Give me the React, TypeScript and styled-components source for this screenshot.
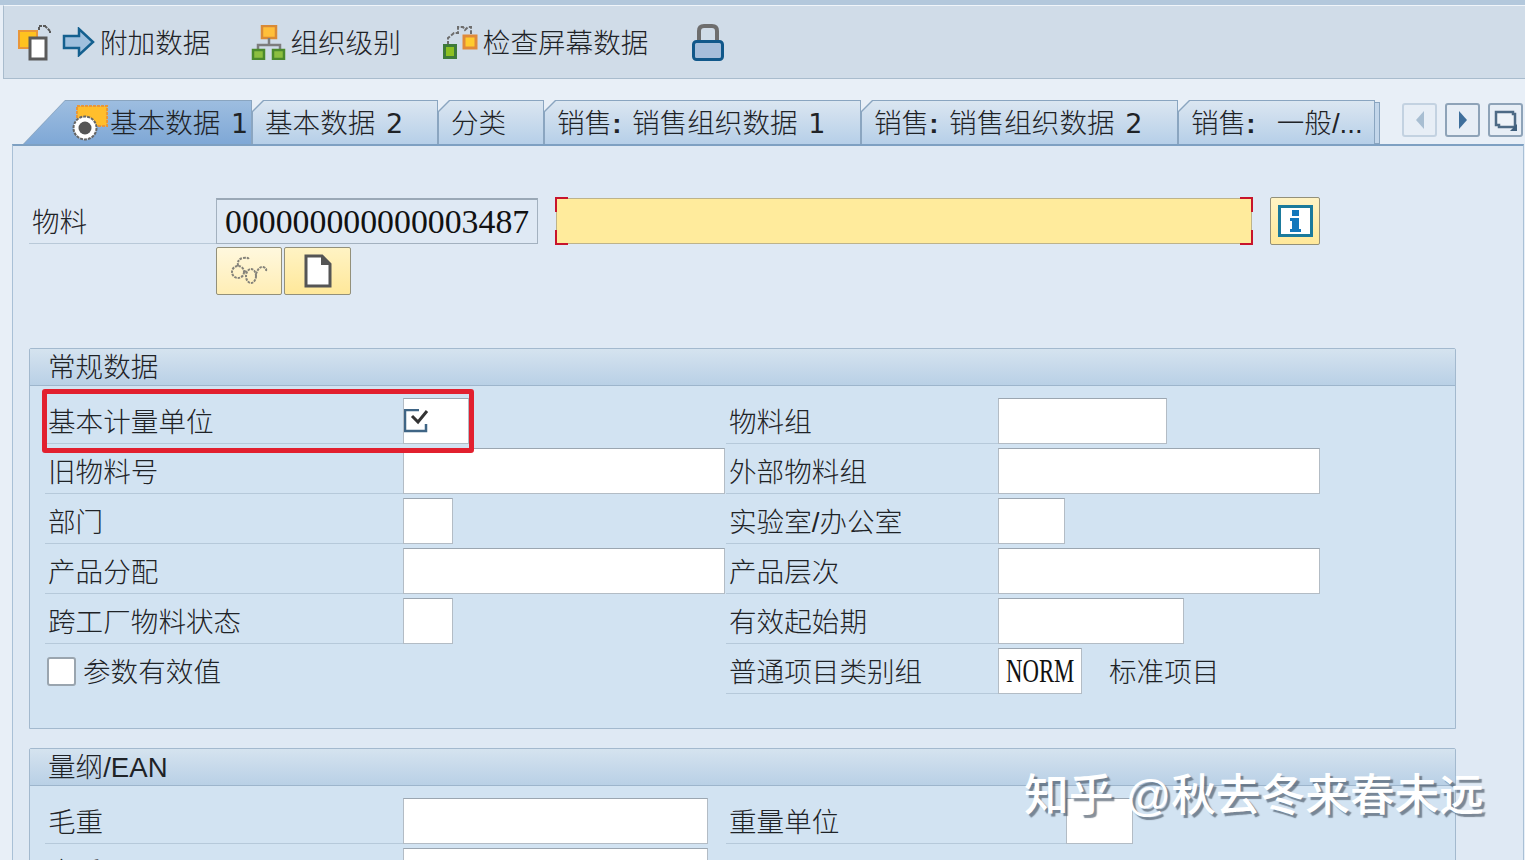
import styled, { createGlobalStyle } from 'styled-components'

const GlobalStyle = createGlobalStyle`
  html, body {
    margin: 0;
    padding: 0;
    background: #e8eff7;
  }
  * {
    box-sizing: border-box;
  }
`

const Page = styled.div`
  position: relative;
  width: 1525px;
  height: 860px;
  overflow: hidden;
  background: #e8eff7;
  color: #1f2327;
  font-family: 'Liberation Sans', 'Noto Sans CJK SC', sans-serif;
  font-size: 27.6px;
  font-weight: 300;
  line-height: 1;
  padding-left: 3px;
  border-top: 5px solid #b3c8dc;
`

const Toolbar = styled.div`
  display: flex;
  align-items: center;
  height: 74px;
  border-top: 1px solid #f0f5fa;
  border-left: 1px solid #a9bccd;
  border-bottom: 1px solid #a9bccd;
  background: #d0dce8;
  padding: 0 0 0 14px;
`

const ToolItem = styled.div<{ $gap: number }>`
  display: flex;
  align-items: center;
  margin-right: ${(p) => p.$gap}px;
  white-space: nowrap;
`

const ToolText = styled.span`
  margin-left: 4px;
  padding-top: 4px;
`

const TabStrip = styled.div`
  display: flex;
  align-items: flex-start;
  height: 44px;
  margin-top: 21px;
  margin-left: 20px;
`

const Tab = styled.div<{ $width: number; $active?: boolean }>`
  position: relative;
  flex: none;
  width: ${(p) => p.$width}px;
  height: 44px;
  background: #8aa5c0;
  clip-path: ${(p) =>
    p.$active
      ? 'polygon(42px 0, 100% 0, 100% 100%, 0 100%)'
      : 'polygon(11px 0, 100% 0, 100% 100%, 0 100%, 0 11px)'};

  &::before {
    content: '';
    position: absolute;
    inset: 1px 1px 0 1px;
    background: ${(p) =>
      p.$active
        ? 'linear-gradient(180deg, #9dbde0 0%, #7fa8d6 100%)'
        : 'linear-gradient(180deg, #dbe6f1 0%, #b6cfe8 100%)'};
    clip-path: ${(p) =>
      p.$active
        ? 'polygon(41px 0, 100% 0, 100% 100%, 0 100%)'
        : 'polygon(11px 0, 100% 0, 100% 100%, 0 100%, 0 11px)'};
  }
`

const TabLabel = styled.span<{ $left: number }>`
  position: absolute;
  left: ${(p) => p.$left}px;
  top: 10px;
  white-space: nowrap;
  word-spacing: 3px;
`

const TabDigit = styled.span`
  font-size: 27px;
  font-weight: 400;
  font-family: 'DejaVu Sans', sans-serif;
`

const TabColon = styled.span`
  font-weight: 700;
`

const TabIcon = styled.svg`
  position: absolute;
  left: 49px;
  top: 5px;
`

const TabBack = styled.div`
  flex: none;
  width: 5px;
  height: 42px;
  margin-top: 2px;
  border: 1px solid #8aa5c0;
  border-left: none;
  background: #c3d6ea;
`

const NavGroup = styled.div`
  display: flex;
  gap: 8px;
  margin-left: 22px;
  margin-top: 3px;
`

const NavButton = styled.div<{ $muted?: boolean }>`
  display: flex;
  align-items: center;
  justify-content: center;
  width: 35px;
  height: 34px;
  border: 2px solid ${(p) => (p.$muted ? '#c3d2e1' : '#8ea3b8')};
  border-radius: 3px;
  background: #e7eef6;
`

const Panel = styled.div`
  margin-left: 9px;
  width: 1512px;
  height: 722px;
  border: 1px solid #a9c0d6;
  border-top: 2px solid #7ea0c2;
  background: #dfe9f4;
  padding: 52px 0 0 16px;
`

const HeadRow = styled.div`
  display: flex;
  align-items: flex-start;
`

const HeadLabel = styled.div`
  width: 187px;
  height: 46px;
  padding: 11px 0 0 3px;
  border-bottom: 1px solid #b9c9d8;
`

const KeyField = styled.div`
  width: 322px;
  height: 46px;
  border: 1px solid #a3b1bf;
  border-top: 2px solid #9aa8b6;
  background: #dfe9f4;
  padding: 5px 0 0 8px;
  color: #111;
  font-family: 'Liberation Serif', serif;
  font-size: 33.8px;
  font-weight: 400;
`

const DescField = styled.div`
  position: relative;
  width: 696px;
  height: 46px;
  margin-left: 18px;
  border: 1px solid #bdb38a;
  background: #ffeb9c;
`

const Bracket = styled.i<{ $right?: boolean; $bottom?: boolean }>`
  position: absolute;
  width: 13px;
  height: 15px;
  ${(p) => (p.$right ? 'right: -2px;' : 'left: -2px;')}
  ${(p) => (p.$bottom ? 'bottom: -2px;' : 'top: -2px;')}
  border-color: #c8142b;
  border-style: solid;
  border-width: ${(p) =>
    `${p.$bottom ? 0 : 2}px ${p.$right ? 2 : 0}px ${p.$bottom ? 2 : 0}px ${p.$right ? 0 : 2}px`};
`

const YellowButton = styled.div<{ $width: number; $strong?: boolean }>`
  display: flex;
  align-items: center;
  justify-content: center;
  width: ${(p) => p.$width}px;
  height: 48px;
  border: 1px solid #93907a;
  border-radius: 2px;
  background: ${(p) =>
    p.$strong
      ? 'linear-gradient(180deg, #fff3c4 0%, #ffe89a 100%)'
      : 'linear-gradient(180deg, #fff8de 0%, #ffeeb5 100%)'};
`

const InfoSlot = styled.div`
  margin: -1px 0 0 18px;
`

const ButtonRow = styled.div`
  display: flex;
  gap: 2px;
  margin: 2px 0 0 187px;
`

const Group = styled.section<{ $height: number; $top: number }>`
  width: 1427px;
  height: ${(p) => p.$height}px;
  margin-top: ${(p) => p.$top}px;
  border: 1px solid #a3b9ce;
  border-radius: 2px 2px 0 0;
  background: #d2e3f2;
`

const GroupTitle = styled.div`
  height: 37px;
  padding: 5px 0 0 18px;
  border-bottom: 1px solid #9db5cc;
  background: linear-gradient(180deg, #d5e3ef 0%, #b9d0e6 100%);
`

const FormBody = styled.div`
  display: flex;
  flex-direction: column;
  gap: 4px;
  padding: 12px 0 0 15px;
`

const Row = styled.div`
  display: flex;
  height: 46px;
`

const Label = styled.div<{ $width: number }>`
  flex: none;
  width: ${(p) => p.$width}px;
  height: 46px;
  padding: 11px 0 0 3px;
  border-bottom: 1px solid #b6c9da;
  white-space: nowrap;
`

const CheckLabel = styled.div`
  display: flex;
  align-items: center;
  gap: 7px;
  flex: none;
  width: 358px;
  height: 46px;
  padding: 0 0 0 2px;
`

const CheckText = styled.span`
  padding-top: 4px;
`

const Box = styled.span`
  width: 29px;
  height: 29px;
  border: 2px solid #9aa5af;
  border-radius: 3px;
  background: #fff;
`

const FieldCell = styled.div`
  flex: none;
  width: 323px;
`

const Input = styled.div<{ $width: number }>`
  display: flex;
  align-items: center;
  width: ${(p) => p.$width}px;
  height: 46px;
  border: 1px solid #b3bcc5;
  border-top-color: #9ba6b1;
  background: #fff;
  overflow: hidden;
`

const SerifValue = styled.span`
  margin-left: 7px;
  color: #111;
  font-family: 'Liberation Serif', serif;
  font-size: 34px;
  font-weight: 400;
  white-space: nowrap;
  transform: scaleX(0.67);
  transform-origin: left center;
`

const Note = styled.span`
  margin: 11px 0 0 27px;
  white-space: nowrap;
`

const Highlight = styled.div`
  position: absolute;
  left: 42px;
  top: 384px;
  width: 432px;
  height: 64px;
  border: 5px solid #e2202f;
  border-radius: 3px;
`

const Watermark = styled.div`
  position: absolute;
  left: 1024px;
  top: 769px;
  color: #fff;
  font-family: 'Liberation Sans', 'Noto Sans CJK SC', sans-serif;
  font-size: 44.7px;
  font-weight: 500;
  white-space: nowrap;
  text-shadow: 3px 3px 1px rgba(70, 85, 100, 0.65);
`

const AddDataIcon = () => (
  <svg width="34" height="38" viewBox="0 0 34 38">
    <rect x="1" y="8" width="18" height="17" fill="#ffc21f" stroke="#e8963a" strokeWidth="2" />
    <path d="M12 15h16v21H12z" fill="#fff" stroke="#5a5a5a" strokeWidth="3" />
    <path d="M21 7V3h7M27 3l5 5M32 8v2" fill="none" stroke="#5a5a5a" strokeWidth="2" strokeDasharray="3 1" />
  </svg>
)

const ArrowIcon = () => (
  <svg width="34" height="30" viewBox="0 0 34 30">
    <path d="M2 9h15V2l14 13-14 13v-7H2z" fill="#9fc0de" stroke="#14608f" strokeWidth="2.5" />
  </svg>
)

const OrgIcon = () => (
  <svg width="35" height="35" viewBox="0 0 35 35">
    <rect x="11" y="1" width="14" height="12" fill="#ffbf3a" stroke="#d98a36" strokeWidth="2.5" />
    <path d="M18 13v6M7 25v-5h22v5" fill="none" stroke="#7d7d7d" strokeWidth="2.5" />
    <rect x="2" y="25" width="11" height="9" fill="#8cbf3f" stroke="#4c8a2c" strokeWidth="2.5" />
    <rect x="22" y="25" width="11" height="9" fill="#8cbf3f" stroke="#4c8a2c" strokeWidth="2.5" />
  </svg>
)

const CheckScreenIcon = () => (
  <svg width="36" height="36" viewBox="0 0 36 36">
    <path d="M5 21v-7l6-5h4V3h5l2 3 3-3h3v7" fill="none" stroke="#6d6d6d" strokeWidth="2" strokeDasharray="4 1.5" />
    <rect x="1.5" y="21.5" width="11" height="12" fill="#8cc021" stroke="#3d7a3a" strokeWidth="3" />
    <rect x="21" y="12" width="12" height="12" fill="#ffcc2e" stroke="#e08a3a" strokeWidth="3" />
  </svg>
)

const LockIcon = () => (
  <svg width="32" height="37" viewBox="0 0 32 37">
    <path d="M7 17V7q0-5 5-5h8q5 0 5 5v10" fill="none" stroke="#6e6e6e" strokeWidth="4" />
    <rect x="1.5" y="17.5" width="29" height="18" rx="3" fill="#a6bedb" stroke="#11588a" strokeWidth="3" />
  </svg>
)

const ActiveTabIcon = () => (
  <TabIcon width="36" height="36" viewBox="0 0 36 36">
    <rect x="5" y="1" width="30" height="20" fill="#ffbe2c" stroke="#e8973a" strokeWidth="2" strokeDasharray="3 1" />
    <circle cx="13" cy="23" r="11.5" fill="#fff" stroke="#666" strokeWidth="2" strokeDasharray="3 1" />
    <circle cx="13" cy="23" r="6.5" fill="#555" />
  </TabIcon>
)

const LeftIcon = () => (
  <svg width="12" height="18" viewBox="0 0 12 18">
    <path d="M10 0v18L2 9z" fill="#a8bed2" />
  </svg>
)

const RightIcon = () => (
  <svg width="12" height="18" viewBox="0 0 12 18">
    <path d="M2 0v18l8-9z" fill="#3f6f9c" />
  </svg>
)

const TabListIcon = () => (
  <svg width="24" height="24" viewBox="0 0 24 24">
    <path d="M2 4h17v2h2v13H5v-2H2z" fill="#eef3f8" stroke="#4d6a85" strokeWidth="2.5" />
    <path d="M23 16v7h-7z" fill="#3f5f7d" />
  </svg>
)

const InfoIcon = () => (
  <svg width="35" height="32" viewBox="0 0 35 32">
    <rect x="1.5" y="1.5" width="32" height="29" fill="#fff" stroke="#1b7a9c" strokeWidth="3" />
    <rect x="14" y="5" width="7" height="6" fill="#1377bb" />
    <path d="M12 13h9v11h2v3H12v-3h2v-8h-2z" fill="#1377bb" />
  </svg>
)

const GlassesIcon = () => (
  <svg width="38" height="30" viewBox="0 0 38 30">
    <g fill="none" stroke="#85837a" strokeWidth="2" strokeDasharray="2.5 1">
      <ellipse cx="8" cy="16" rx="6" ry="6" />
      <ellipse cx="21" cy="20" rx="5" ry="7" />
      <path d="M8 10q-1-7 5-8t6 2M14 15l3 1M26 18q3-8 7-7 4 1 3 4" />
    </g>
  </svg>
)

const DocIcon = () => (
  <svg width="28" height="34" viewBox="0 0 28 34">
    <path d="M2 2h16l8 8v22H2z" fill="#fff" stroke="#555" strokeWidth="3" />
    <path d="M17 1l10 10H17z" fill="#555" />
  </svg>
)

const CheckedIcon = () => (
  <svg width="26" height="24" viewBox="0 0 26 24">
    <path d="M15 1H1v21h21v-7" fill="none" stroke="#3f6585" strokeWidth="2.5" />
    <path d="M8 7l6 6 9-11" fill="none" stroke="#333" strokeWidth="3" />
  </svg>
)

const App = () => {
  return (
    <Page>
      <GlobalStyle />
      <Toolbar>
        <ToolItem $gap={10}>
          <AddDataIcon />
        </ToolItem>
        <ToolItem $gap={41}>
          <ArrowIcon />
          <ToolText>附加数据</ToolText>
        </ToolItem>
        <ToolItem $gap={42}>
          <OrgIcon />
          <ToolText>组织级别</ToolText>
        </ToolItem>
        <ToolItem $gap={44}>
          <CheckScreenIcon />
          <ToolText>检查屏幕数据</ToolText>
        </ToolItem>
        <ToolItem $gap={0}>
          <LockIcon />
        </ToolItem>
      </Toolbar>

      <TabStrip>
        <Tab $width={229} $active>
          <ActiveTabIcon />
          <TabLabel $left={87}>
            基本数据 <TabDigit>1</TabDigit>
          </TabLabel>
        </Tab>
        <Tab $width={186}>
          <TabLabel $left={13}>
            基本数据 <TabDigit>2</TabDigit>
          </TabLabel>
        </Tab>
        <Tab $width={106}>
          <TabLabel $left={13}>分类</TabLabel>
        </Tab>
        <Tab $width={317}>
          <TabLabel $left={13}>
            销售<TabColon>:</TabColon> 销售组织数据 <TabDigit>1</TabDigit>
          </TabLabel>
        </Tab>
        <Tab $width={317}>
          <TabLabel $left={13}>
            销售<TabColon>:</TabColon> 销售组织数据 <TabDigit>2</TabDigit>
          </TabLabel>
        </Tab>
        <Tab $width={197}>
          <TabLabel $left={13}>
            销售<TabColon>:</TabColon> &nbsp;一般/...
          </TabLabel>
        </Tab>
        <TabBack />
        <NavGroup>
          <NavButton $muted>
            <LeftIcon />
          </NavButton>
          <NavButton>
            <RightIcon />
          </NavButton>
          <NavButton>
            <TabListIcon />
          </NavButton>
        </NavGroup>
      </TabStrip>

      <Panel>
        <HeadRow>
          <HeadLabel>物料</HeadLabel>
          <KeyField>000000000000003487</KeyField>
          <DescField>
            <Bracket />
            <Bracket $right />
            <Bracket $bottom />
            <Bracket $right $bottom />
          </DescField>
          <InfoSlot>
            <YellowButton $width={50} $strong>
              <InfoIcon />
            </YellowButton>
          </InfoSlot>
        </HeadRow>
        <ButtonRow>
          <YellowButton $width={66}>
            <GlassesIcon />
          </YellowButton>
          <YellowButton $width={67} $strong>
            <DocIcon />
          </YellowButton>
        </ButtonRow>

        <Group $height={381} $top={53}>
          <GroupTitle>常规数据</GroupTitle>
          <FormBody>
            <Row>
              <Label $width={358}>基本计量单位</Label>
              <FieldCell>
                <Input $width={66}>
                  <CheckedIcon />
                </Input>
              </FieldCell>
              <Label $width={272}>物料组</Label>
              <Input $width={169} />
            </Row>
            <Row>
              <Label $width={358}>旧物料号</Label>
              <FieldCell>
                <Input $width={322} />
              </FieldCell>
              <Label $width={272}>外部物料组</Label>
              <Input $width={322} />
            </Row>
            <Row>
              <Label $width={358}>部门</Label>
              <FieldCell>
                <Input $width={50} />
              </FieldCell>
              <Label $width={272}>实验室/办公室</Label>
              <Input $width={67} />
            </Row>
            <Row>
              <Label $width={358}>产品分配</Label>
              <FieldCell>
                <Input $width={322} />
              </FieldCell>
              <Label $width={272}>产品层次</Label>
              <Input $width={322} />
            </Row>
            <Row>
              <Label $width={358}>跨工厂物料状态</Label>
              <FieldCell>
                <Input $width={50} />
              </FieldCell>
              <Label $width={272}>有效起始期</Label>
              <Input $width={186} />
            </Row>
            <Row>
              <CheckLabel>
                <Box />
                <CheckText>参数有效值</CheckText>
              </CheckLabel>
              <FieldCell />
              <Label $width={272}>普通项目类别组</Label>
              <Input $width={84}>
                <SerifValue>NORM</SerifValue>
              </Input>
              <Note>标准项目</Note>
            </Row>
          </FormBody>
        </Group>

        <Group $height={200} $top={19}>
          <GroupTitle>量纲/EAN</GroupTitle>
          <FormBody>
            <Row>
              <Label $width={358}>毛重</Label>
              <FieldCell>
                <Input $width={305} />
              </FieldCell>
              <Label $width={340}>重量单位</Label>
              <Input $width={67} />
            </Row>
            <Row>
              <Label $width={358}>净重</Label>
              <FieldCell>
                <Input $width={305} />
              </FieldCell>
            </Row>
          </FormBody>
        </Group>
      </Panel>

      <Highlight />
      <Watermark>知乎 @秋去冬来春未远</Watermark>
    </Page>
  )
}

export default App
